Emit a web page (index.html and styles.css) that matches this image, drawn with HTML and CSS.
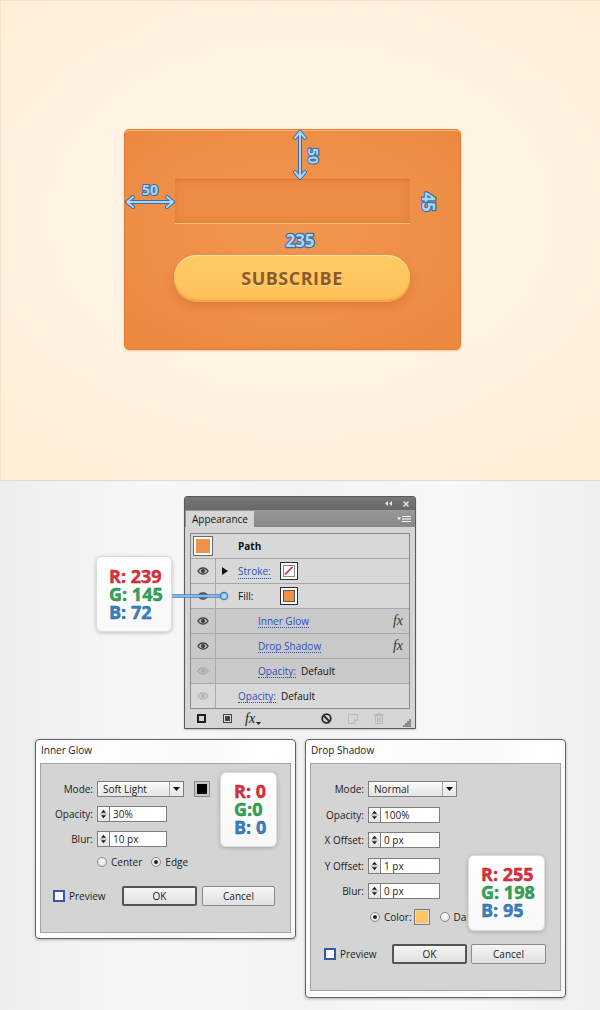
FILE: index.html
```html
<!DOCTYPE html>
<html>
<head>
<meta charset="utf-8">
<title>Subscribe form</title>
<link rel="stylesheet" href="styles.css">
</head>
<body>
<section class="hero">
  <div class="card">
    <div class="field"></div>
    <div class="btn">SUBSCRIBE</div>
    <svg class="dims" width="337" height="221" viewBox="0 0 337 221">
      <path class="arr-o" d="M176 3V49M171 9L176 3L181 9M171 43L176 49L181 43M3 73H49M9 68L3 73L9 78M43 68L49 73L43 78"/>
      <path class="arr-i" d="M176 3V49M171 9L176 3L181 9M171 43L176 49L181 43M3 73H49M9 68L3 73L9 78M43 68L49 73L43 78"/>
      <text class="dl dl-s" x="26" y="66" text-anchor="middle">50</text>
      <text class="dl dl-s" x="0" y="0" text-anchor="middle" dominant-baseline="central" transform="translate(189 27) rotate(90)">50</text>
      <text class="dl" x="0" y="0" text-anchor="middle" dominant-baseline="central" transform="translate(304 73) rotate(90)">45</text>
      <text class="dl" x="176" y="118" text-anchor="middle">235</text>
    </svg>
  </div>
</section>

<section class="lower">
  <div class="row1">
    <div class="rgb rgb-a"><span class="r">R: 239</span><span class="g">G: 145</span><span class="b">B: 72</span></div>
    <div class="panel">
      <div class="ptitle">
        <svg class="pt-ic" width="7" height="5" viewBox="0 0 7 5"><path d="M3 0L0 2.5L3 5ZM7 0L4 2.5L7 5Z"/></svg>
        <svg class="pt-ic pt-x" width="6" height="6" viewBox="0 0 6 6"><path d="M0.5 0.5L5.5 5.5M5.5 0.5L0.5 5.5"/></svg>
      </div>
      <div class="ptabs">
        <div class="ptab">Appearance</div>
        <svg class="pmenu" width="14" height="8" viewBox="0 0 14 8"><path class="pm-t" d="M0 2.5H4L2 5Z"/><path class="pm-l" d="M5 1.5H14M5 4H14M5 6.5H14"/></svg>
      </div>
      <div class="plist">
        <div class="prow">
          <div class="pcol pcol-sw"><span class="sw-path"></span></div>
          <div class="pc"><span class="ind"></span><span class="bold">Path</span></div>
        </div>
        <div class="prow">
          <div class="pcol"><svg class="eye" viewBox="0 0 12 8"><path class="eye-o" d="M0.8 4C2.5 1.5 4.2 0.8 6 0.8S9.5 1.5 11.2 4C9.5 6.5 7.8 7.2 6 7.2S2.5 6.5 0.8 4Z"/><circle class="eye-p" cx="6" cy="4" r="2"/></svg></div>
          <div class="pc"><span class="ind ind-tri"><svg width="6" height="8" viewBox="0 0 6 8"><path d="M0 0L6 4L0 8Z"/></svg></span><span class="lbl"><span class="lnk">Stroke:</span></span><span class="sw2"><span class="sw2-in sw2-stroke"><svg width="11" height="11" viewBox="0 0 11 11"><path d="M2 9.5L9.5 2"/></svg></span></span></div>
        </div>
        <div class="prow">
          <div class="pcol"><svg class="eye" viewBox="0 0 12 8"><path class="eye-o" d="M0.8 4C2.5 1.5 4.2 0.8 6 0.8S9.5 1.5 11.2 4C9.5 6.5 7.8 7.2 6 7.2S2.5 6.5 0.8 4Z"/><circle class="eye-p" cx="6" cy="4" r="2"/></svg></div>
          <div class="pc"><span class="ind"></span><span class="lbl">Fill:</span><span class="sw2"><span class="sw2-in sw2-fill"></span></span></div>
        </div>
        <div class="prow dark">
          <div class="pcol"><svg class="eye" viewBox="0 0 12 8"><path class="eye-o" d="M0.8 4C2.5 1.5 4.2 0.8 6 0.8S9.5 1.5 11.2 4C9.5 6.5 7.8 7.2 6 7.2S2.5 6.5 0.8 4Z"/><circle class="eye-p" cx="6" cy="4" r="2"/></svg></div>
          <div class="pc"><span class="ind ind-fx"></span><span class="lnk">Inner Glow</span><span class="fx">fx</span></div>
        </div>
        <div class="prow dark">
          <div class="pcol"><svg class="eye" viewBox="0 0 12 8"><path class="eye-o" d="M0.8 4C2.5 1.5 4.2 0.8 6 0.8S9.5 1.5 11.2 4C9.5 6.5 7.8 7.2 6 7.2S2.5 6.5 0.8 4Z"/><circle class="eye-p" cx="6" cy="4" r="2"/></svg></div>
          <div class="pc"><span class="ind ind-fx"></span><span class="lnk">Drop Shadow</span><span class="fx">fx</span></div>
        </div>
        <div class="prow dark">
          <div class="pcol"><svg class="eye faded" viewBox="0 0 12 8"><path class="eye-o" d="M0.8 4C2.5 1.5 4.2 0.8 6 0.8S9.5 1.5 11.2 4C9.5 6.5 7.8 7.2 6 7.2S2.5 6.5 0.8 4Z"/><circle class="eye-p" cx="6" cy="4" r="2"/></svg></div>
          <div class="pc"><span class="ind ind-fx"></span><span class="lnk">Opacity:</span><span class="val">Default</span></div>
        </div>
        <div class="prow last">
          <div class="pcol"><svg class="eye faded" viewBox="0 0 12 8"><path class="eye-o" d="M0.8 4C2.5 1.5 4.2 0.8 6 0.8S9.5 1.5 11.2 4C9.5 6.5 7.8 7.2 6 7.2S2.5 6.5 0.8 4Z"/><circle class="eye-p" cx="6" cy="4" r="2"/></svg></div>
          <div class="pc"><span class="ind"></span><span class="lnk">Opacity:</span><span class="val">Default</span></div>
        </div>
      </div>
      <div class="ptools">
        <span class="t-sq"></span>
        <span class="t-sq2"><span></span></span>
        <span class="t-fx">fx<svg width="5" height="3" viewBox="0 0 5 3"><path d="M0 0H5L2.5 3Z"/></svg></span>
        <svg class="t-no" width="11" height="11" viewBox="0 0 11 11"><circle cx="5.5" cy="5.5" r="4.3"/><path d="M2.5 2.5L8.5 8.5"/></svg>
        <svg class="t-new" width="10" height="10" viewBox="0 0 10 10"><path d="M0.5 0.5H9.5V6L6 9.5H0.5ZM6 9.5V6H9.5"/></svg>
        <svg class="t-trash" width="10" height="11" viewBox="0 0 10 11"><path d="M0 1.5H10M3.5 1.5V0.5H6.5V1.5M1.5 2.5H8.5V10.5H1.5ZM3.5 4V9M5 4V9M6.5 4V9"/></svg>
        <svg class="t-grip" width="8" height="8" viewBox="0 0 8 8"><path d="M6 0h2v2h-2zM4 2h2v2h-2zM6 2h2v2h-2zM2 4h2v2h-2zM4 4h2v2h-2zM6 4h2v2h-2zM0 6h2v2h-2zM2 6h2v2h-2zM4 6h2v2h-2zM6 6h2v2h-2z"/></svg>
      </div>
    </div>
    <svg class="connector" width="62" height="16" viewBox="0 0 62 16">
      <path class="con-o" d="M2 8H51"/>
      <path class="con-i" d="M2 8H51"/>
      <circle class="con-c" cx="54" cy="8" r="3.6"/>
    </svg>
  </div>

  <div class="row2">
    <div class="dlg dlg1">
      <div class="dlg-title">Inner Glow</div>
      <div class="dlg-body">
        <div class="frow"><span class="flbl">Mode:</span><span class="sel"><span class="sel-t">Soft Light</span><span class="sel-a"><svg width="7" height="4" viewBox="0 0 7 4"><path d="M0 0H7L3.5 4Z"/></svg></span></span><span class="csw csw-black"></span></div>
        <div class="frow"><span class="flbl">Opacity:</span><svg class="spin" width="13" height="16" viewBox="0 0 13 16"><path class="sp-a" d="M3.5 6.5L6.5 3L9.5 6.5ZM3.5 9.5L6.5 13L9.5 9.5Z"/><path class="sp-l" d="M2 8H11"/></svg><span class="inp">30%</span></div>
        <div class="frow"><span class="flbl">Blur:</span><svg class="spin" width="13" height="16" viewBox="0 0 13 16"><path class="sp-a" d="M3.5 6.5L6.5 3L9.5 6.5ZM3.5 9.5L6.5 13L9.5 9.5Z"/><path class="sp-l" d="M2 8H11"/></svg><span class="inp">10 px</span></div>
        <div class="frow radios"><span class="rad"></span><span class="rl">Center</span><span class="rad on"></span><span class="rl">Edge</span></div>
        <div class="foot"><span class="pvw"><span class="chk"></span><span>Preview</span></span><span class="bt bt-ok">OK</span><span class="bt">Cancel</span></div>
        <div class="rgb rgb-d1"><span class="r">R: 0</span><span class="g">G:0</span><span class="b">B: 0</span></div>
      </div>
    </div>

    <div class="dlg dlg2">
      <div class="dlg-title">Drop Shadow</div>
      <div class="dlg-body">
        <div class="frow"><span class="flbl">Mode:</span><span class="sel"><span class="sel-t">Normal</span><span class="sel-a"><svg width="7" height="4" viewBox="0 0 7 4"><path d="M0 0H7L3.5 4Z"/></svg></span></span></div>
        <div class="frow"><span class="flbl">Opacity:</span><svg class="spin" width="13" height="16" viewBox="0 0 13 16"><path class="sp-a" d="M3.5 6.5L6.5 3L9.5 6.5ZM3.5 9.5L6.5 13L9.5 9.5Z"/><path class="sp-l" d="M2 8H11"/></svg><span class="inp">100%</span></div>
        <div class="frow"><span class="flbl">X Offset:</span><svg class="spin" width="13" height="16" viewBox="0 0 13 16"><path class="sp-a" d="M3.5 6.5L6.5 3L9.5 6.5ZM3.5 9.5L6.5 13L9.5 9.5Z"/><path class="sp-l" d="M2 8H11"/></svg><span class="inp">0 px</span></div>
        <div class="frow"><span class="flbl">Y Offset:</span><svg class="spin" width="13" height="16" viewBox="0 0 13 16"><path class="sp-a" d="M3.5 6.5L6.5 3L9.5 6.5ZM3.5 9.5L6.5 13L9.5 9.5Z"/><path class="sp-l" d="M2 8H11"/></svg><span class="inp">1 px</span></div>
        <div class="frow"><span class="flbl">Blur:</span><svg class="spin" width="13" height="16" viewBox="0 0 13 16"><path class="sp-a" d="M3.5 6.5L6.5 3L9.5 6.5ZM3.5 9.5L6.5 13L9.5 9.5Z"/><path class="sp-l" d="M2 8H11"/></svg><span class="inp">0 px</span></div>
        <div class="frow colrow"><span class="rad on"></span><span class="rl">Color:</span><span class="csw csw-yellow"></span><span class="rad rad-dk"></span><span class="rl">Darkness:</span></div>
        <div class="foot"><span class="pvw"><span class="chk"></span><span>Preview</span></span><span class="bt bt-ok">OK</span><span class="bt bt-c2">Cancel</span></div>
        <div class="rgb rgb-d2"><span class="r">R: 255</span><span class="g">G: 198</span><span class="b">B: 95</span></div>
      </div>
    </div>
  </div>
</section>
</body>
</html>
```

FILE: styles.css
```css
* { box-sizing: border-box; margin: 0; padding: 0; }
html, body { width: 600px; height: 1010px; overflow: hidden; }
body {
  font-family: "Open Sans", "Noto Sans", sans-serif;
  background: #f3f3f3;
  color: #1a1a1a;
}

/* ---------- hero ---------- */
.hero {
  height: 481px;
  padding: 129px 0 0 124px;
  background: radial-gradient(ellipse 75% 65% at 50% 45%, #fff6ea 0%, #fff2e0 60%, #ffeed8 100%);
  box-shadow: inset 0 -1px 0 #e4dbcf, inset 1px 1px 0 #f3e2ca;
}
.card {
  position: relative;
  width: 337px;
  height: 221px;
  border: 1px solid #e17f3a;
  border-radius: 5px;
  background: radial-gradient(ellipse 70% 70% at 50% 45%, #f1954f 0%, #ef8f48 60%, #eb873f 100%);
  box-shadow: inset 0 1px 0 rgba(255, 205, 130, .7), 0 1px 2px rgba(200, 120, 40, .35);
}
.field {
  margin: 49px 0 0 50px;
  width: 235px;
  height: 45px;
  background: #ed8c45;
  border-bottom: 1px solid #ffc660;
  box-shadow: inset 0 0 9px rgba(190, 85, 20, .28), inset 0 1px 1px rgba(190, 85, 20, .2);
}
.btn {
  margin: 31px 0 0 49px;
  width: 236px;
  height: 45px;
  border-radius: 23px;
  background: linear-gradient(#ffcb66, #ffc25b);
  box-shadow: inset 0 1px 0 #ffe2a4, inset 0 -2px 2px rgba(245, 160, 60, .35), 0 2px 0 #f3a448, 0 5px 10px rgba(190, 80, 20, .35);
  display: flex;
  align-items: center;
  justify-content: center;
  font-weight: 700;
  font-size: 18px;
  letter-spacing: .5px;
  color: #8c5a27;
  text-shadow: 0 1px 0 rgba(255, 228, 160, .6);
}
.dims { position: absolute; left: -1px; top: -1px; overflow: visible; }
.arr-o { fill: none; stroke: #3b6ea8; stroke-width: 4; stroke-linecap: round; stroke-linejoin: round; }
.arr-i { fill: none; stroke: #aad6fa; stroke-width: 2; stroke-linecap: round; stroke-linejoin: round; }
.dl {
  font-family: "Open Sans", sans-serif;
  font-weight: 700;
  font-size: 17px;
  fill: #a9d6fa;
  stroke: #3b6ea8;
  stroke-width: 2.5px;
  paint-order: stroke;
  stroke-linejoin: round;
}
.dl-s { font-size: 14px; stroke-width: 2.2px; }

/* ---------- lower ---------- */
.lower {
  height: 529px;
  padding-top: 15px;
  background: linear-gradient(90deg, #eeeeee 0%, #f7f7f7 25%, #f3f3f3 50%, #f8f8f8 75%, #efefef 100%);
}
.row1 {
  position: relative;
  display: flex;
  align-items: flex-start;
  padding-left: 96px;
  gap: 12px;
}

/* RGB badges */
.rgb {
  display: flex;
  flex-direction: column;
  background: linear-gradient(#ffffff, #f8f8f8);
  border: 1px solid #dcdcdc;
  border-radius: 6px;
  box-shadow: 0 1px 4px rgba(0, 0, 0, .22);
  font-weight: 700;
  font-size: 18px;
  line-height: 18px;
  padding-left: 12px;
  white-space: nowrap;
}
.rgb .r { color: #dc3139; -webkit-text-stroke: .4px #b41f2a; }
.rgb .g { color: #31a35a; -webkit-text-stroke: .4px #1f7e41; }
.rgb .b { color: #3a80c1; -webkit-text-stroke: .4px #225d97; }
.rgb-a { width: 76px; height: 76px; margin-top: 60px; padding-top: 10px; }
.rgb-d1 { position: absolute; left: 179px; top: 8px; width: 57px; height: 75px; padding-top: 9px; padding-left: 13px; }
.rgb-d2 { position: absolute; left: 157px; top: 91px; width: 77px; height: 76px; padding-top: 9px; }

.connector { position: absolute; left: 170px; top: 92px; }
.con-o { stroke: #3a7fc3; stroke-width: 3.5; fill: none; }
.con-i { stroke: #e4f2ff; stroke-width: 1.2; fill: none; }
.con-c { fill: #a9d6fa; stroke: #3a7fc3; stroke-width: 1.5; }

/* Appearance panel */
.panel {
  width: 232px;
  height: 233px;
  border: 1px solid #5a5a5a;
  border-radius: 3px 3px 0 0;
  background: #d5d5d5;
  font-size: 10px;
  display: flex;
  flex-direction: column;
  box-shadow: 0 1px 2px rgba(0, 0, 0, .2);
}
.ptitle {
  height: 13px;
  background: linear-gradient(#777, #686868);
  display: flex;
  align-items: center;
  justify-content: flex-end;
  gap: 11px;
  padding-right: 6px;
}
.pt-ic path { fill: #e6e6e6; }
.pt-x path { stroke: #e6e6e6; stroke-width: 1.4; fill: none; }
.ptabs {
  height: 17px;
  background: linear-gradient(#989898, #878787);
  display: flex;
  align-items: flex-end;
  justify-content: space-between;
  padding-left: 1px;
  padding-right: 4px;
}
.ptab {
  width: 68px;
  height: 16px;
  background: #d5d5d5;
  padding-left: 6px;
  line-height: 16px;
  color: #111;
  font-size: 10px;
}
.pmenu { align-self: center; }
.pm-t { fill: #fff; }
.pm-l { stroke: #fff; stroke-width: 1.2; }
.plist {
  margin: 6px 5px 0 5px;
  height: 176px;
  border: 1px solid #8b8b8b;
  border-bottom: none;
}
.prow {
  height: 25px;
  display: flex;
  border-bottom: 1px solid #a9a9a9;
  background: #d8d8d8;
}
.prow.dark { background: #c9c9c9; }
.prow.last { border-bottom-color: #8b8b8b; }
.pcol {
  width: 25px;
  border-right: 1px solid #aaaaaa;
  display: flex;
  align-items: center;
  justify-content: center;
}
.pcol-sw { border-right: none; justify-content: flex-start; padding-left: 2px; }
.sw-path {
  width: 20px;
  height: 20px;
  border: 1px solid #6a6a6a;
  background: #f0914a;
  box-shadow: inset 0 0 0 2px #fff;
}
.eye { width: 12px; height: 8px; }
.eye-o { fill: #bdbdbd; stroke: #3c3c3c; stroke-width: 1.2; }
.eye-p { fill: #3c3c3c; }
.eye.faded { opacity: .22; }
.pc {
  flex: 1;
  display: flex;
  align-items: center;
  padding-right: 6px;
}
.ind { width: 22px; height: 8px; flex: none; }
.ind-tri { padding-left: 6px; display: flex; }
.ind-tri path { fill: #111; }
.ind-fx { width: 42px; }
.bold { font-weight: 700; color: #111; }
.lbl { width: 42px; flex: none; color: #111; }
.lnk {
  color: #2f4fc2;
  border-bottom: 1px dotted #2f4fc2;
  line-height: 12px;
}
.val { margin-left: 5px; color: #111; }
.fx {
  margin-left: auto;
  font-family: "Liberation Serif", serif;
  font-style: italic;
  font-size: 14px;
  color: #333;
}
.sw2 {
  width: 18px;
  height: 18px;
  border: 1px solid #2e2e2e;
  background: #fff;
  padding: 2px;
  flex: none;
}
.sw2-in { display: block; width: 12px; height: 12px; border: 1px solid #555; }
.sw2-stroke { background: #fff; border-color: #888; }
.sw2-stroke svg { display: block; margin: -1px; }
.sw2-stroke path { stroke: #d21f3c; stroke-width: 1.6; }
.sw2-fill { background: #f0914a; }

.ptools {
  height: 19px;
  display: flex;
  align-items: center;
}
.t-sq { margin-left: 12px; width: 9px; height: 9px; border: 2px solid #1d1d1d; }
.t-sq2 { margin-left: 17px; width: 9px; height: 9px; border: 1px solid #444; padding: 1px; background: #ddd; }
.t-sq2 span { display: block; width: 5px; height: 5px; background: #444; }
.t-fx {
  margin-left: 13px;
  font-family: "Liberation Serif", serif;
  font-style: italic;
  font-size: 14px;
  color: #222;
  display: flex;
  align-items: flex-end;
  line-height: 14px;
}
.t-fx svg { margin-left: 1px; margin-bottom: 1px; }
.t-fx path { fill: #222; }
.t-no { margin-left: 60px; }
.t-no circle, .t-no path { fill: none; stroke: #2a2a2a; stroke-width: 1.8; }
.t-new { margin-left: 16px; }
.t-new path { fill: none; stroke: #b9b9b9; stroke-width: 1; }
.t-trash { margin-left: 16px; }
.t-trash path { fill: none; stroke: #b9b9b9; stroke-width: 1; }
.t-grip { margin-left: 19px; align-self: flex-end; margin-bottom: 1px; }
.t-grip path { fill: #8a8a8a; }

/* Dialogs */
.row2 {
  display: flex;
  align-items: flex-start;
  gap: 9px;
  padding-left: 35px;
  margin-top: 10px;
}
.dlg {
  width: 261px;
  border: 1px solid #626262;
  border-radius: 4px;
  background: linear-gradient(100deg, #ffffff 0%, #fafafa 60%, #ffffff 80%, #f6f6f6 100%);
  box-shadow: 0 1px 3px rgba(0, 0, 0, .28);
  font-size: 10px;
  color: #1c1c1c;
  padding: 0 4px;
}
.dlg1 { height: 200px; }
.dlg2 { height: 259px; }
.dlg-title { height: 23px; line-height: 21px; padding-left: 1px; color: #222; }
.dlg-body {
  position: relative;
  background: #d4d4d4;
  border: 1px solid #a3a3a3;
  padding-top: 17px;
}
.dlg1 .dlg-body { height: 170px; --lw: 56px; }
.dlg2 .dlg-body { height: 228px; --lw: 57px; }
.frow {
  height: 16px;
  display: flex;
  align-items: center;
}
.frow + .frow { margin-top: 9px; }
.dlg2 .frow + .frow { margin-top: 9.5px; }
.flbl { width: var(--lw); padding-right: 4px; text-align: right; flex: none; }
.sel {
  width: 87px;
  height: 16px;
  border: 1px solid #7e7e7e;
  background: linear-gradient(#fbfbfb, #e5e5e5);
  display: flex;
  align-items: center;
}
.dlg2 .sel { width: 89px; }
.sel-t { flex: 1; padding-left: 5px; }
.sel-a {
  width: 14px;
  height: 14px;
  border-left: 1px solid #a8a8a8;
  display: flex;
  align-items: center;
  justify-content: center;
}
.sel-a path { fill: #111; }
.csw {
  width: 16px;
  height: 16px;
  border: 1px solid #8a8a8a;
  box-shadow: inset 0 0 0 2px #c8c8c8;
  flex: none;
}
.csw-black { margin-left: 10px; background: #000; }
.csw-yellow { margin-left: 2px; background: #ffc65f; box-shadow: inset 0 0 0 1px #e0e0e0; border-color: #7a7a7a; }
.spin {
  width: 13px;
  height: 16px;
  border: 1px solid #7e7e7e;
  background: linear-gradient(#fafafa, #e4e4e4);
  flex: none;
}
.sp-a { fill: #1c1c1c; }
.sp-l { stroke: #9a9a9a; stroke-width: 1; }
.inp {
  width: 57px;
  height: 16px;
  border: 1px solid #7e7e7e;
  border-left: none;
  background: #fff;
  padding-left: 3px;
  line-height: 14px;
}
.dlg2 .inp { width: 59px; }
.rad {
  width: 10px;
  height: 10px;
  border: 1px solid #8a8a8a;
  border-radius: 50%;
  background: radial-gradient(circle at 50% 35%, #ffffff, #d9d9d9);
  flex: none;
  display: flex;
  align-items: center;
  justify-content: center;
}
.rad.on::after { content: ""; width: 4px; height: 4px; border-radius: 50%; background: #222; }
.rl { margin-left: 4px; }
.radios { padding-left: 56px; }
.dlg1 .radios { margin-top: 7px; }
.radios .rl + .rad { margin-left: 9px; }
.colrow { width: 156px; overflow: hidden; white-space: nowrap; padding-left: 59px; }
.dlg2 .colrow { margin-top: 8px; }
.rad-dk { margin-left: 10px; }
.foot {
  display: flex;
  align-items: center;
  padding-left: 12px;
  margin-top: 16px;
}
.dlg2 .foot { margin-top: 19px; padding-left: 13px; }
.pvw { width: 69px; display: flex; align-items: center; }
.dlg2 .pvw { width: 68px; }
.chk {
  width: 12px;
  height: 12px;
  border: 2px solid #3559a8;
  background: #fff;
  margin-right: 4px;
}
.bt {
  width: 73px;
  height: 20px;
  border: 1px solid #8a8a8a;
  border-radius: 2px;
  background: linear-gradient(#f6f6f6, #e0e0e0);
  display: flex;
  align-items: center;
  justify-content: center;
  margin-left: 5px;
}
.bt-ok { width: 75px; margin-left: 0; border: 2px solid #555; }
.bt-c2 { width: 75px; margin-left: 4px; }
```
